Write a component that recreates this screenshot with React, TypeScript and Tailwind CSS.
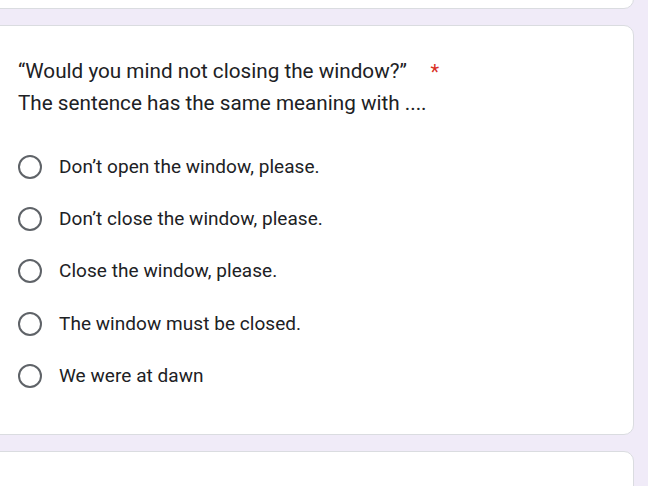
const options = [
  'Don’t open the window, please.',
  'Don’t close the window, please.',
  'Close the window, please.',
  'The window must be closed.',
  'We were at dawn',
];

export default function App() {
  return (
    <div className="h-[486px] w-[648px] overflow-hidden bg-[#f0ebf8] font-['Roboto',sans-serif] text-[#202124]">
      <div className="flex flex-col gap-[16px]">
        <div className="-ml-[12px] -mt-[32px] h-[41px] w-[646px] rounded-[10px] border border-[#dadce0] bg-white" />

        <div className="-ml-[12px] h-[410px] w-[646px] rounded-[10px] border border-[#dadce0] bg-white pl-[29px] pt-[29px]">
          <div className="flex items-start">
            <div className="text-[20.7px] leading-[32px]">
              <div>“Would you mind not closing the window?”</div>
              <div>The sentence has the same meaning with ....</div>
            </div>
            <span className="ml-[4px] mt-[1px] text-[20px] leading-[32px] text-[#d93025]">*</span>
          </div>

          <div className="mt-[36px] flex flex-col gap-[28.2px]">
            {options.map((o) => (
              <label key={o} className="flex h-[24px] items-center gap-[17px]">
                <span className="h-[24px] w-[24px] shrink-0 rounded-full border-2 border-[#5f6368]" />
                <span className="text-[19px] leading-[24px] tracking-[0.05px]">{o}</span>
              </label>
            ))}
          </div>
        </div>

        <div className="-ml-[12px] h-[100px] w-[646px] rounded-[10px] border border-[#dadce0] bg-white" />
      </div>
    </div>
  );
}
